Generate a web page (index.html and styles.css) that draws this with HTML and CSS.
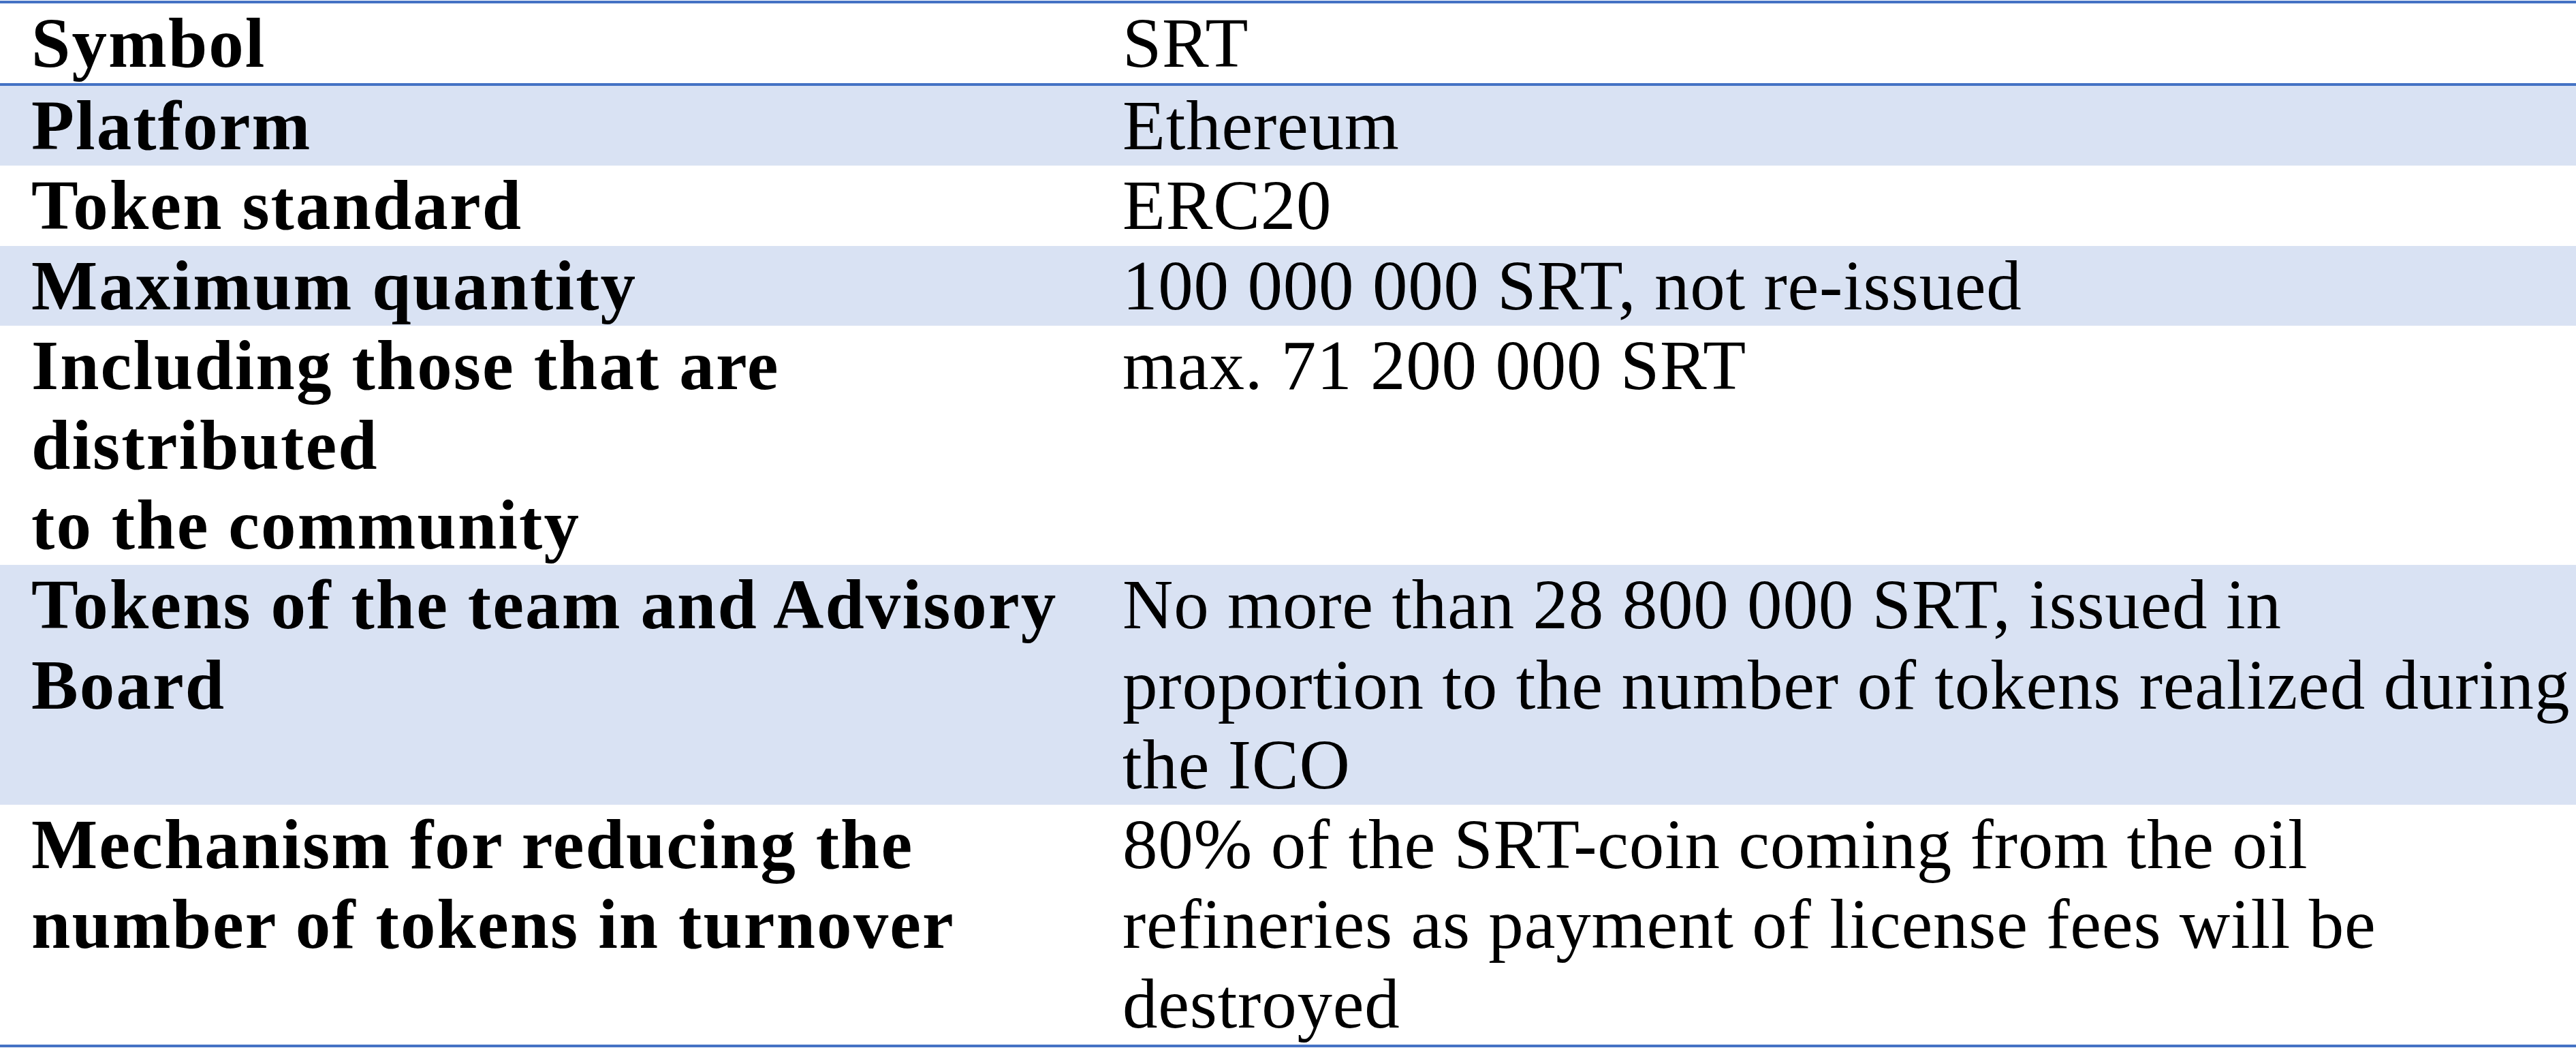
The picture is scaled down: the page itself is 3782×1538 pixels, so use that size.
FILE: index.html
```html
<!DOCTYPE html>
<html lang="en">
<head>
<meta charset="utf-8">
<title>SRT token parameters</title>
<link rel="stylesheet" href="styles.css">
</head>
<body>
<div class="sheet">
  <table class="specs">
    <colgroup>
      <col class="col-label">
      <col class="col-value">
    </colgroup>
    <tbody>
      <tr class="row head">
        <td class="label">Symbol</td>
        <td class="value">SRT</td>
      </tr>
      <tr class="row band">
        <td class="label">Platform</td>
        <td class="value">Ethereum</td>
      </tr>
      <tr class="row">
        <td class="label">Token standard</td>
        <td class="value">ERC20</td>
      </tr>
      <tr class="row band">
        <td class="label">Maximum quantity</td>
        <td class="value">100 000 000 SRT, not re-issued</td>
      </tr>
      <tr class="row">
        <td class="label">Including those that are<br>distributed<br>to the community</td>
        <td class="value">max. 71 200 000 SRT</td>
      </tr>
      <tr class="row band">
        <td class="label">Tokens of the team and Advisory<br>Board</td>
        <td class="value">No more than 28 800 000 SRT, issued in<br>proportion to the number of tokens realized during<br>the ICO</td>
      </tr>
      <tr class="row">
        <td class="label">Mechanism for reducing the<br>number of tokens in turnover</td>
        <td class="value">80% of the SRT-coin coming from the oil<br>refineries as payment of license fees will be<br>destroyed</td>
      </tr>
    </tbody>
  </table>
</div>
</body>
</html>
```

FILE: styles.css
```css
html, body {
  margin: 0;
  padding: 0;
  background: #ffffff;
  overflow: hidden;
}

.sheet {
  padding-top: 1px;
  width: 3782px;
}

.specs {
  width: 100%;
  table-layout: fixed;
  border-collapse: collapse;
  border-top: 4px solid #4472C4;
  border-bottom: 4px solid #4472C4;
  font-family: "Liberation Serif", "Times New Roman", serif;
  font-size: 103px;
  line-height: 117.2px;
  color: #000000;
}

.col-label {
  width: 1602px;
}

.row td {
  padding: 0;
  vertical-align: top;
  white-space: nowrap;
}

.row.head td {
  border-bottom: 4px solid #4472C4;
}

.row.band td {
  background: #D9E2F3;
}

.label {
  padding-left: 46px !important;
  font-weight: bold;
  letter-spacing: 2.1px;
}

.value {
  padding-left: 46px !important;
  letter-spacing: 0.8px;
}
```
